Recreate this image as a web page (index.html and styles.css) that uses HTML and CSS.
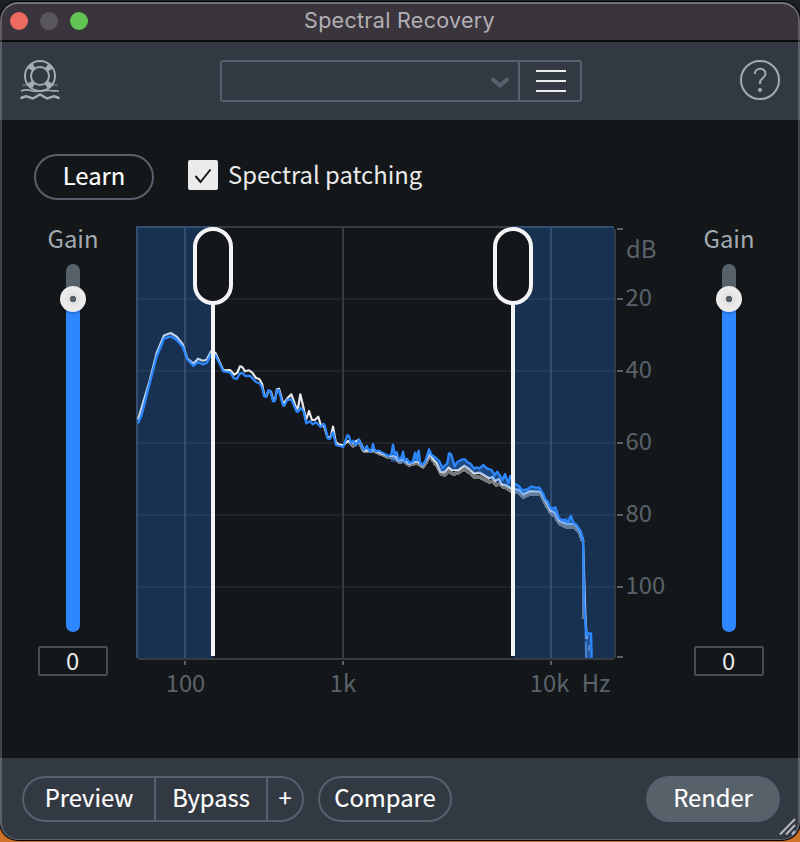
FILE: index.html
```html
<!DOCTYPE html>
<html lang="en">

<head>
    <meta charset="UTF-8" />
    <meta name="viewport" content="width=device-width, initial-scale=1.0" />
    <title>Spectral Recovery</title>
    <link rel="stylesheet" href="styles.css">
</head>

<body>
    <div class="window">
        <div class="titlebar">
            <div class="lights">
                <span class="light close"></span>
                <span class="light minimize"></span>
                <span class="light zoom"></span>
            </div>
            <div class="title">Spectral Recovery</div>
        </div>

        <div class="toolbar">
            <svg class="logo" width="40" height="44" viewBox="0 0 40 44" fill="none" stroke="#a3abb4">
                <circle cx="20" cy="17" r="15" stroke-width="2" />
                <circle cx="20" cy="17" r="9" stroke-width="2" />
                <circle cx="20" cy="17" r="12" stroke-width="6" stroke-dasharray="5.4 13.45" stroke-dashoffset="-6.7" />
                <path d="M2.500 26h6M31.500 26h6" stroke-width="1.500" opacity=".55" />
                <path d="M1 32q5-2 9.500-.5t9.500.5 9.500-.5 9.500.5" stroke-width="1.600" />
                <path d="M.5 39.500q2-1.500 5.500-2.300l7 2.300 7-4 7 4 7-2.300q3.500.8 5.500 2.300" stroke-width="2.500" />
            </svg>
            <div class="preset">
                <button class="preset-select">
                    <svg width="20" height="12" viewBox="0 0 20 12" fill="none" stroke="#56616b" stroke-width="4"
                        stroke-linecap="round" stroke-linejoin="round">
                        <path d="M3 2.500l7 6 7-6" />
                    </svg>
                </button>
                <button class="preset-menu"><i></i><i></i><i></i></button>
            </div>
            <svg class="help" width="40" height="40" viewBox="0 0 40 40" fill="none" stroke="#a3abb4" stroke-width="2">
                <circle cx="20" cy="20" r="19" />
                <path d="M14.700 14c.2-7 10.800-7 10.800-.3 0 4.200-5.500 4.300-5.500 8.800V24" />
                <circle cx="20" cy="30" r="2.100" fill="#a3abb4" stroke="none" />
            </svg>
        </div>

        <div class="main">
            <div class="options">
                <button class="btn learn">Learn</button>
                <label class="check">
                    <span class="box">
                        <svg width="30" height="30" viewBox="0 0 30 30" fill="none" stroke="#14181b" stroke-width="2">
                            <path d="M7.500 16l5 6L22.500 9.500" />
                        </svg>
                    </span>
                    Spectral patching
                </label>
            </div>

            <div class="panel">
                <div class="gain">
                    <div class="gain-label">Gain</div>
                    <div class="slider">
                        <div class="knob"></div>
                    </div>
                    <div class="value">0</div>
                </div>

                <!-- Spectrum -->
                <svg class="spectrum" width="530" height="474" viewBox="136 226 530 474">
                    <rect x="138" y="228" width="476" height="430" fill="#13161b" />
                    <g fill="#1f2429">
                        <rect x="138" y="298" width="476" height="2" />
                        <rect x="138" y="370" width="476" height="2" />
                        <rect x="138" y="442" width="476" height="2" />
                        <rect x="138" y="514" width="476" height="2" />
                        <rect x="138" y="586" width="476" height="2" />
                    </g>
                    <g fill="#343b43">
                        <rect x="136" y="226" width="2" height="432" />
                        <rect x="138" y="226" width="476" height="2" />
                        <rect x="184" y="228" width="2" height="430" />
                        <rect x="342" y="228" width="2" height="430" />
                        <rect x="550" y="228" width="2" height="430" />
                        <rect x="614" y="229" width="2" height="429" />
                        <rect x="138" y="658" width="476" height="2" />
                    </g>

                    <!-- input noise and input level -->
                    <g fill="none" stroke-linejoin="round">
                        <path stroke="#777a7d" stroke-width="4" shape-rendering="crispEdges"
                            d="M349 442L353 446 359 442 364 451 374 451 388 457 395 458 399 462 404 461 409 465 417 463 423 467 430 456 434 462 437 466 441 474 445 475 449 471 453 474 458 473 464 469 470 473 474 477 480 477 489 482 493 481 496 485 500 484 503 487 507 488 511 491 519 492 523 497 530 494 541 494 545 503 551 513 555 516 560 524 567 527 575 527 580 533 583 542" />
                        <path stroke="#777a7d" stroke-width="2" d="M583 544v75M586 642v16M589 645v6" />
                        <path stroke="#ebebeb" stroke-width="2.200"
                            d="M138 419.500L149.300 382 156.700 353 164 335.500 170.700 333 176.700 336.700 182.700 344.300 187.300 358.700 193.300 363.700 198 358.700 202.700 360.700 206.700 359.700 211 351.300 215.300 352.700 223.300 370.300 230 370 234.300 374.700 237.300 372.700 240 366.300 242.300 367 245 371.300 249 370.300 252 372.300 256 378 259.300 379 262 383.700 264.300 395.300 266.300 396.300 268.700 390.700 271 391.700 273.300 400.700 275 400 277 389.300 279 388.700 283.300 404 288 397.700 291.300 394.300 294 401.700 296.700 409.300 298.300 406.700 300.300 394.300 303.300 406.700 306 420 309 411 312 420 314.700 420 318.300 416.700 321 425.700 323.700 425 327.300 436.700 330.700 437.300 333 426.700 335.700 441.700 338.300 444.300 343.300 445.300 348 441 353 443 359 439.700 364.300 450.700 373.300 450 388 456 395 456 398.300 460.700 403.300 459.300 408.700 464 412.700 462.700 417.300 461.300 422.700 465.700 430 454 433.300 459.300 436.700 462.700 440.700 471.700 444 472.300 448.700 467.300 451.700 470 458.300 470 464.300 465.700 469.300 469 474 473.300 480 472.700 489.300 478.300 492.700 477 495 481 499 479 501.700 484.300 505.700 485 511 488.300 519.300 490 523.300 494.300 530 491 540.700 491.700 545 500 550.700 510.700 554 512 559.300 520.700 567.300 524 575 524 580 530.700 583 540 585.300 613 586.700 639" />
                    </g>

                    <!-- selected bands -->
                    <g fill="#2d88ff" fill-opacity=".24">
                        <rect x="136" y="226" width="77" height="432" />
                        <rect x="513" y="226" width="101" height="432" />
                    </g>

                    <!-- recovered signal -->
                    <path fill="#2d88ff" fill-opacity=".45"
                        d="M391 454L393 444.700 395 455 398 460 403 452 405 461 409 463 413 462 415 452.700 418.700 450.700 420.300 463.300 425.300 461.300 429 449.300 431.700 455 436 458 439.300 461 442.700 468.300 447.300 463.300 449 453.300 451 454 454.700 466.300 457.300 462 462.700 459.300 470 463.300 474.300 468.700 483.300 465 491.700 470 494.700 475.300 497.300 471.700 502.700 480 505 474 508.300 483.300 510.300 476 515 484 521.700 490 531 486.700 539.300 487.700 550 507.700 555.300 507.300 561 520 571 516 583 540 584.300 606 587 635 591 633 591.700 658 585 658 582 542 575 525 567 525 559 521 551 511 545 501 540 492 530 491 523 495 511 489 501 484 495 481 489 478 480 473 474 473 464 466 458 470 452 470 449 467 444 473 440 472 437 463 430 455 423 466 417 462 409 465 398 462 391 462z" />
                    <path fill="none" stroke="#2d88ff" stroke-width="2.300" stroke-linejoin="round"
                        d="M138 423.300L141.700 415 149.300 385 156.700 356.700 164 338.700 170.700 336.300 176.700 340 182.700 346.700 187.300 359.300 193.300 365.700 198 362.300 202.700 364.300 206.700 363 211 354 215.300 355 223.300 371.300 230 372.300 234 378.300 236.700 379 240 373.300 242.300 373 245.300 376 250.300 376 256 382 260 383.700 262.300 388.300 264 396 266 397 268.300 390.300 270.300 391 273 401.300 274.700 401 277 390.300 278.700 390 283 405.300 284.300 405.700 287.300 400 291.300 399.300 296.700 411.700 298 411.700 300.700 408 303.300 410.700 306.300 423.300 310 421.300 312.700 424.300 316 422.300 320.700 427 323.300 423.700 324.700 425 327.700 438.300 329.700 439 333 432.300 336 445 343.300 447 347.300 435.300 349 436 351 443.300 353.300 440.700 355.700 445.300 359 439.700 362.300 447.300 364.300 450 366.700 446 368.700 450 371 451.700 373 444 374.700 450.700 379.300 451 382.300 452.700 385 454 388 456 391.300 454.700 393 444.700 395 455 396.700 452.300 398.700 459.300 401.300 458.300 403 451.700 404.700 460.700 406.700 458.700 409.300 462.700 412.700 462 415 452.700 416.700 460 418.700 450.700 420.300 463.300 422.700 465 425.300 461.300 429 449.300 431.700 455 436 458 439.300 461 442.700 468.300 445 465.300 447.300 463.300 449 453.300 451 454 454.700 466.300 457.300 462 462.700 459.300 465 459.300 467.300 462.300 470 463.300 474.300 468.700 476.700 467.300 479.300 468.700 483.300 465 486.700 468.300 491.700 470 494.700 475.300 497.300 471.700 502.700 480 505 474 508.300 483.300 510.300 476 515 484 519 486 521.700 490 526.700 489.700 531 486.700 535 487.300 539.300 487.700 543.300 494 545.300 499.300 547.700 501.300 550 507.700 553.300 508.700 555.300 507.300 558.700 517.300 561 520 565 520 568.300 522.300 571 516 573.300 522.700 576.700 525 581 532 583 540 584.300 606.700 586 630 587.300 635.700 588.300 633.300 591 633.300 591.700 657.700" />

                    <!-- crossover handles -->
                    <g stroke="#f3f3f3" stroke-width="4" fill="#13161b">
                        <path d="M213 303v353M513 303v353" />
                        <rect x="195" y="229" width="36" height="74" rx="18" />
                        <rect x="495" y="229" width="36" height="74" rx="18" />
                    </g>

                    <g fill="#5a636b">
                        <rect x="617" y="228" width="6" height="2" />
                        <rect x="617" y="298" width="6" height="2" />
                        <rect x="617" y="370" width="6" height="2" />
                        <rect x="617" y="442" width="6" height="2" />
                        <rect x="617" y="514" width="6" height="2" />
                        <rect x="617" y="586" width="6" height="2" />
                        <rect x="617" y="656" width="6" height="2" />
                        <rect x="184" y="661" width="2" height="4" />
                        <rect x="342" y="661" width="2" height="4" />
                        <rect x="550" y="661" width="2" height="4" />
                    </g>
                    <g class="axis">
                        <text x="626" y="258">dB</text>
                        <text x="625.500" y="306">20</text>
                        <text x="625.500" y="378">40</text>
                        <text x="625.500" y="450">60</text>
                        <text x="625.500" y="522">80</text>
                        <text x="625.500" y="594">100</text>
                        <text x="185.500" y="692" text-anchor="middle">100</text>
                        <text x="343" y="692" text-anchor="middle">1k</text>
                        <text x="549.500" y="692" text-anchor="middle">10k</text>
                        <text x="596" y="692" text-anchor="middle">Hz</text>
                    </g>
                </svg>

                <div class="gain">
                    <div class="gain-label">Gain</div>
                    <div class="slider">
                        <div class="knob"></div>
                    </div>
                    <div class="value">0</div>
                </div>
            </div>
        </div>

        <div class="footer">
            <div class="btn-group">
                <button class="preview">Preview</button>
                <button class="bypass">Bypass</button>
                <button class="plus">+</button>
            </div>
            <button class="btn compare">Compare</button>
            <button class="btn render">Render</button>
        </div>

        <svg class="grip" width="18" height="18" viewBox="0 0 18 18" stroke="#b4b9bf" stroke-width="2">
            <path d="M1 16.500L16 1M7 16.500l9-9.500M13 16.500l3-3.500" />
        </svg>
    </div>
</body>

</html>
```
FILE: styles.css
```css
* {
    box-sizing: border-box;
}

body {
    margin: 0;
    padding: 2px 0;
    height: 842px;
    overflow: hidden;
    background: linear-gradient(#1b2228 0, #12161a 30px, #12161a 700px, #b85a1c 800px, #d0752b 842px);
    font-family: "Noto Sans CJK SC", "Noto Sans", sans-serif;
    font-size: 23.8px;
    color: #fff;
}

svg {
    display: block;
}

button {
    margin: 0;
    padding: 0;
    background: none;
    border: none;
    color: #fff;
    font-family: inherit;
    font-size: 23.8px;
    -webkit-text-stroke: 0.15px #fff;
    line-height: 37px;
}

.window {
    position: relative;
    display: flex;
    flex-direction: column;
    height: 838px;
    border-radius: 18px;
    overflow: hidden;
    background: #131719;
    box-shadow: 0 0 0 1px #000;
}

/* light edge of the window */
.window::after {
    content: "";
    position: absolute;
    inset: 0;
    border: 2px solid rgba(255, 255, 255, 0.2);
    border-bottom-width: 1px;
    border-top-color: rgba(255, 255, 255, 0.3);
    border-radius: 18px;
    pointer-events: none;
}

.titlebar {
    display: grid;
    grid-template-columns: 100px 1fr 100px;
    align-items: center;
    height: 40px;
    background: #3a353c;
    border-bottom: 2px solid #0b0c0e;
}

.lights {
    display: flex;
    gap: 12px;
    padding-left: 10px;
}

.light {
    width: 18px;
    height: 18px;
    border-radius: 50%;
}

.close {
    background: #ed6a5e;
}

.minimize {
    background: #5a565d;
}

.zoom {
    background: #61c454;
}

.title {
    height: 36px;
    padding-right: 1px;
    font-family: Inter, sans-serif;
    font-size: 21.5px;
    line-height: 34px;
    letter-spacing: 0.3px;
    text-align: center;
    color: #b3afb5;
}

.toolbar {
    display: flex;
    justify-content: space-between;
    align-items: center;
    height: 78px;
    padding: 0 20px;
    background: #323943;
}

.help {
    margin-bottom: 2px;
}

.preset {
    display: flex;
    width: 362px;
    height: 42px;
    margin-left: 2px;
    border: 2px solid #56616b;
    border-radius: 3px;
}

.preset-select {
    flex: 1;
    display: flex;
    justify-content: flex-end;
    align-items: center;
    padding: 3px 8px 0 0;
}

.preset-menu {
    width: 62px;
    display: flex;
    flex-direction: column;
    align-items: center;
    justify-content: center;
    gap: 8px;
    padding-left: 2px;
    border-left: 2px solid #56616b;
}

.preset-menu i {
    width: 30px;
    height: 2px;
    background: #ebebeb;
}

.main {
    height: 638px;
    padding: 34px 36px 0 34px;
}

.options {
    display: flex;
    align-items: center;
    height: 46px;
}

.btn {
    height: 46px;
    padding-bottom: 5px;
    border: 2px solid #56616b;
    border-radius: 23px;
}

.learn {
    width: 120px;
}

.check {
    display: flex;
    gap: 10px;
    height: 30px;
    margin: -4px 0 0 34px;
    line-height: 28px;
    color: #ebebeb;
}

.box {
    width: 30px;
    height: 30px;
    background: #ebebeb;
    border-radius: 2px;
}

.panel {
    display: flex;
    justify-content: space-between;
    align-items: flex-start;
    padding: 26px 0 0 4px;
}

.gain {
    width: 70px;
    display: flex;
    flex-direction: column;
    align-items: center;
}

.gain-label {
    height: 38px;
    line-height: 23px;
    color: #a3abb0;
}

.slider {
    width: 14px;
    height: 368px;
    padding-top: 22px;
    border-radius: 7px;
    background: linear-gradient(#56616a 35px, #2d88ff 35px);
}

.knob {
    width: 26px;
    height: 26px;
    margin-left: -6px;
    border-radius: 50%;
    background: radial-gradient(circle, #56616a 3px, #dedede 3.5px, #ebebeb 9px);
    box-shadow: 0 1px 3px rgba(0, 0, 0, 0.3);
}

.value {
    width: 70px;
    height: 30px;
    margin-top: 14px;
    padding-right: 1px;
    border: 2px solid #464e55;
    border-radius: 2px;
    line-height: 24px;
    text-align: center;
    color: #ebebeb;
}

.axis {
    font-size: 23.8px;
    fill: #5a636b;
}

.footer {
    flex: 1;
    display: flex;
    align-items: flex-start;
    padding: 18px 20px 0 22px;
    background: #323943;
}

.btn-group {
    display: flex;
    width: 282px;
    height: 46px;
    margin-right: 14px;
    border: 2px solid #56616b;
    border-radius: 23px;
}

.btn-group button {
    padding-bottom: 5px;
}

.preview {
    width: 130px;
}

.bypass {
    width: 114px;
    border-left: 2px solid #56616b;
    border-right: 2px solid #56616b;
}

.plus {
    flex: 1;
}

.compare {
    width: 134px;
}

.render {
    width: 134px;
    margin-left: auto;
    background: #56616a;
}

.grip {
    position: absolute;
    right: 3px;
    bottom: 4px;
    fill: none;
}
```
